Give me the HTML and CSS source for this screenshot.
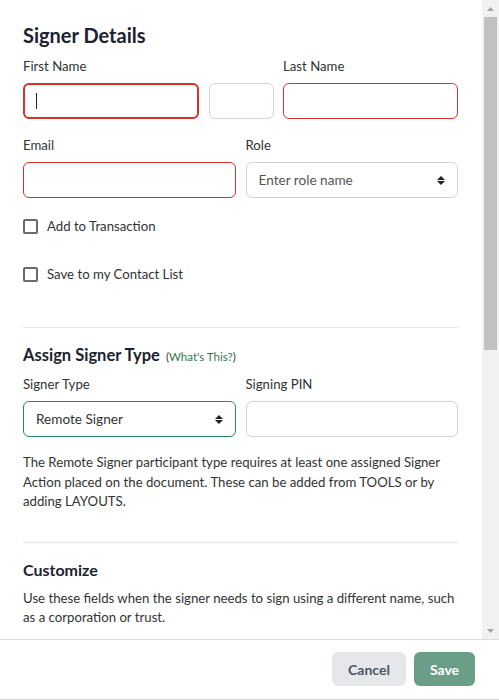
FILE: index.html
```html
<!DOCTYPE html>
<html lang="en">
<head>
<meta charset="utf-8">
<title>Signer Details</title>
<link rel="stylesheet" href="styles.css">
</head>
<body>
<div class="modal">
  <div class="modal-body">
    <div class="content">
      <h2 class="title">Signer Details</h2>

      <div class="grid-names">
        <label class="label">First Name</label>
        <span></span>
        <label class="label">Last Name</label>
        <div class="input input-focus input-error"><span class="caret"></span></div>
        <div class="input"></div>
        <div class="input input-error"></div>
      </div>

      <div class="grid-two mt-16">
        <label class="label">Email</label>
        <label class="label">Role</label>
        <div class="input input-error"></div>
        <div class="input select">
          <span class="placeholder">Enter role name</span>
          <svg class="sort" width="8" height="9" viewBox="0 0 8 9"><path d="M4 0 L8 4 H0 Z M0 5 H8 L4 9 Z" fill="#222"/></svg>
        </div>
      </div>

      <div class="check-row first-check"><span class="checkbox"></span><span class="check-text">Add to Transaction</span></div>
      <div class="check-row second-check"><span class="checkbox"></span><span class="check-text">Save to my Contact List</span></div>

      <hr class="divider div-1">

      <h3 class="section">Assign Signer Type <span class="whats">(<span class="whats-link">What's This?</span>)</span></h3>

      <div class="grid-two">
        <label class="label">Signer Type</label>
        <label class="label">Signing PIN</label>
        <div class="input select select-green">
          <span class="value">Remote Signer</span>
          <svg class="sort" width="8" height="9" viewBox="0 0 8 9"><path d="M4 0 L8 4 H0 Z M0 5 H8 L4 9 Z" fill="#222"/></svg>
        </div>
        <div class="input"></div>
      </div>

      <p class="para para-1">The Remote Signer participant type requires at least one assigned Signer Action placed on the document. These can be added from TOOLS or by adding LAYOUTS.</p>

      <hr class="divider div-2">

      <h3 class="section section-2">Customize</h3>
      <p class="para para-2">Use these fields when the signer needs to sign using a different name, such as a corporation or trust.</p>
    </div>
    <div class="scrollbar" aria-hidden="true">
      <div class="sb-button">
        <svg width="7" height="4" viewBox="0 0 7 4"><path d="M3.5 0 L7 4 H0 Z" fill="#a3a3a3"/></svg>
      </div>
      <div class="sb-track">
        <div class="sb-thumb"></div>
      </div>
      <div class="sb-button">
        <svg width="7" height="4" viewBox="0 0 7 4"><path d="M0 0 H7 L3.5 4 Z" fill="#a3a3a3"/></svg>
      </div>
    </div>
  </div>
  <div class="modal-footer">
    <button class="btn btn-cancel" type="button">Cancel</button>
    <button class="btn btn-save" type="button">Save</button>
  </div>
</div>
</body>
</html>
```

FILE: styles.css
```css
* { box-sizing: border-box; }

html, body {
  margin: 0;
  padding: 0;
  background: #ffffff;
}

body {
  font-family: "Lato", "Liberation Sans", Arial, sans-serif;
  font-size: 13.2px;
  color: #333333;
}

.modal {
  width: 499px;
  height: 700px;
  display: flex;
  flex-direction: column;
  background: #fff;
  border-bottom: 1px solid #d9d9d9;
}

.modal-body {
  height: 639px;
  flex: none;
  display: flex;
  overflow: hidden;
}

.content {
  flex: 1;
  min-width: 0;
  padding: 23px 24px 0 23px;
}

.scrollbar {
  width: 17px;
  flex: none;
  background: #f1f1f1;
  display: flex;
  flex-direction: column;
}

.sb-button {
  height: 17px;
  flex: none;
  display: flex;
  align-items: center;
  justify-content: center;
}

.sb-track {
  flex: 1;
  padding: 0 2px;
}

.sb-thumb {
  height: 333px;
  background: #c1c1c1;
}

.title {
  margin: 0 0 9px;
  font-size: 20px;
  line-height: 24px;
  font-weight: 700;
  color: #1c2230;
}

.label {
  display: block;
  font-size: 13.2px;
  line-height: 20px;
  color: #333;
  margin-bottom: 7px;
}

.grid-names {
  display: grid;
  grid-template-columns: 176px 65px 1fr;
  column-gap: 9.5px;
}

.grid-two {
  display: grid;
  grid-template-columns: 1fr 1fr;
  column-gap: 10px;
}

.mt-16 { margin-top: 16px; }

.input {
  height: 36px;
  border: 1px solid #d4d4d8;
  border-radius: 6px;
  background: #fff;
  display: flex;
  align-items: center;
  padding: 0 12px;
}

.input-error { border-color: #d9302c; }
.input-focus { border-width: 2px; padding-left: 11px; }

.caret {
  display: block;
  width: 1px;
  height: 16px;
  background: #222;
}

.select {
  justify-content: space-between;
}
.select-green { border-color: #238a60; }

.placeholder { color: #555; font-size: 13.6px; }
.value { color: #333; font-size: 13.6px; }
.sort { flex: none; }

.check-row {
  display: flex;
  align-items: center;
  gap: 9px;
  height: 20px;
}
.first-check { margin-top: 18px; }
.second-check { margin-top: 28px; }

.checkbox {
  width: 15px;
  height: 15px;
  border: 2px solid #6a6a6a;
  border-radius: 2px;
  flex: none;
}
.check-text { color: #333; }

.divider {
  border: 0;
  border-top: 1px solid #e6e6e6;
  margin: 0;
}
.div-1 { margin-top: 43px; }
.div-2 { margin-top: 30px; }

.section {
  margin: 16px 0 6px;
  font-size: 16.5px;
  line-height: 22px;
  font-weight: 700;
  color: #1c2230;
}
.section-2 { margin: 16px 0 8px; font-size: 16px; }

.whats {
  font-size: 11.5px;
  font-weight: 400;
  color: #333;
  margin-left: 2px;
}
.whats-link { color: #2e7a4f; }

.para {
  margin: 0;
  line-height: 19.5px;
  color: #333;
}
.para-1 { margin-top: 16px; }

.modal-footer {
  flex: 1;
  border-top: 1px solid #dcdcdc;
  display: flex;
  justify-content: flex-end;
  align-items: center;
  gap: 8px;
  padding: 0 24px 1px 0;
}

.btn {
  height: 34px;
  border: 0;
  border-radius: 6px;
  font-family: inherit;
  font-size: 14px;
  font-weight: 700;
  padding: 0;
}
.btn-cancel {
  width: 74px;
  background: #e5e7eb;
  color: #4b5563;
}
.btn-save {
  width: 61px;
  background: #6b9e86;
  color: #fff;
}
```
